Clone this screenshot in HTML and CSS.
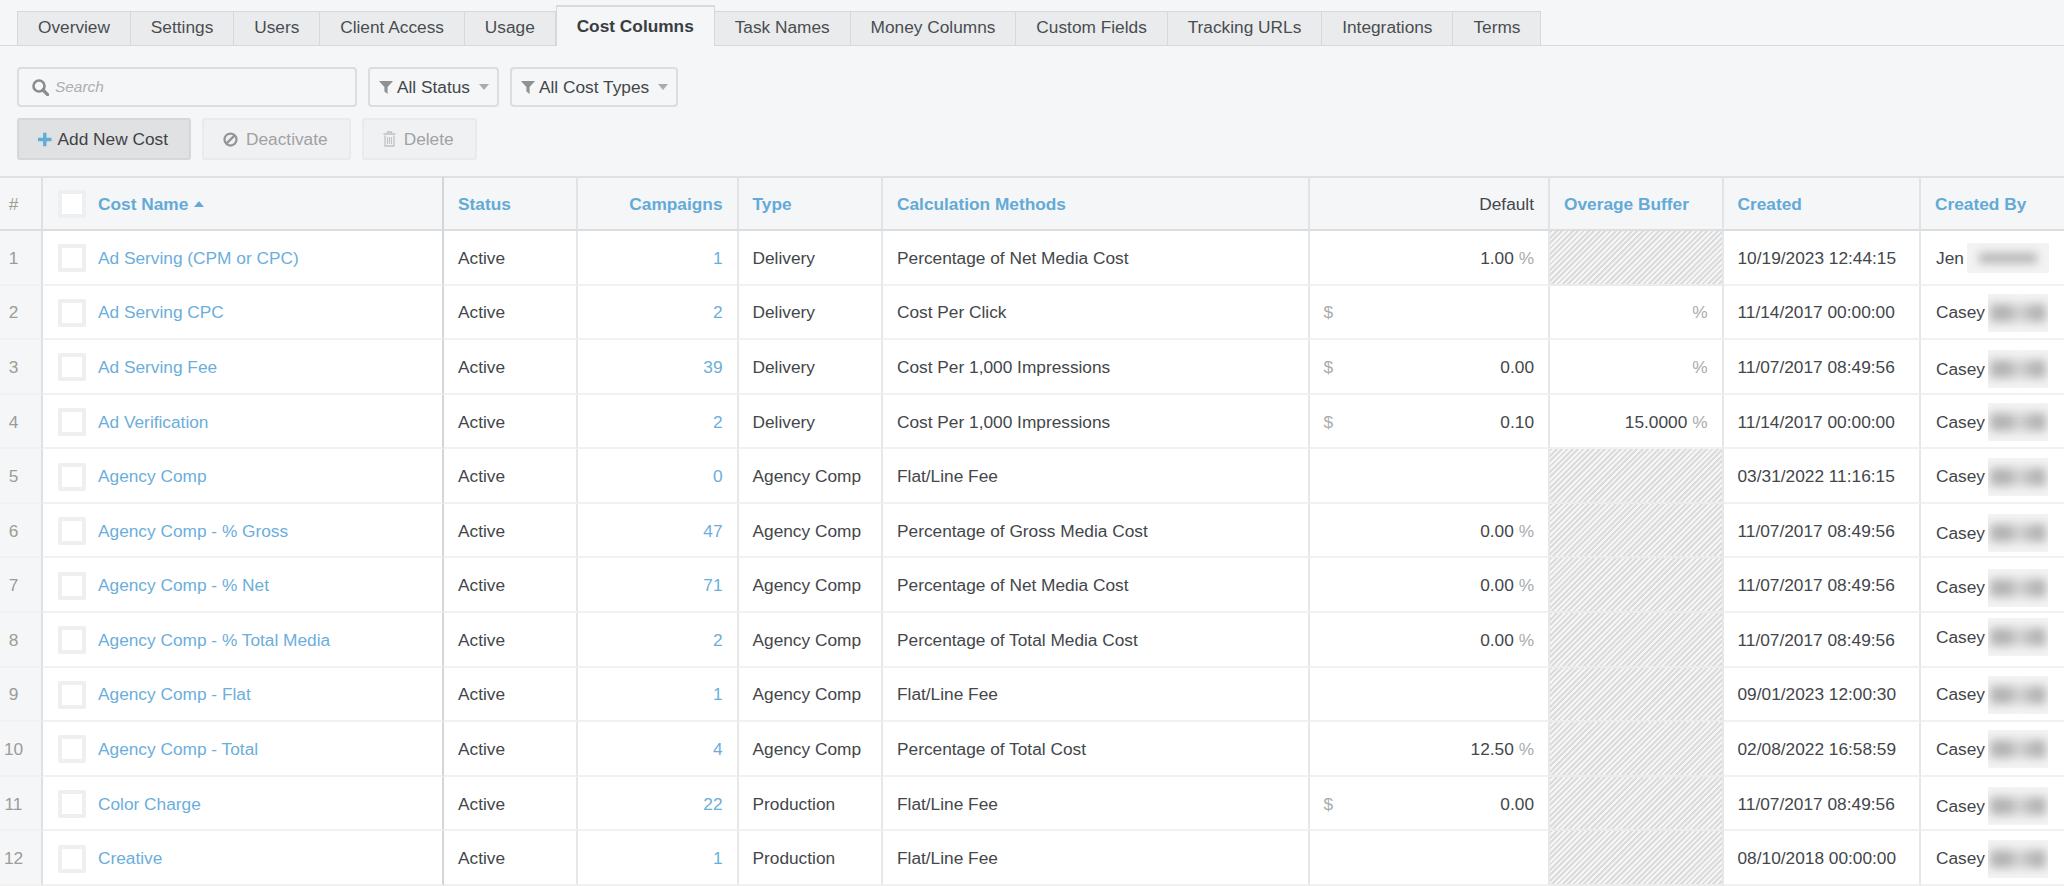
FILE: index.html
```html
<!DOCTYPE html>
<html lang="en">
<head>
<meta charset="utf-8">
<title>Cost Columns</title>
<link rel="stylesheet" href="styles.css">
</head>
<body>
<nav class="tabs">
  <a class="tab">Overview</a><a class="tab">Settings</a><a class="tab">Users</a><a class="tab">Client Access</a><a class="tab">Usage</a><a class="tab active">Cost Columns</a><a class="tab">Task Names</a><a class="tab">Money Columns</a><a class="tab">Custom Fields</a><a class="tab">Tracking URLs</a><a class="tab">Integrations</a><a class="tab">Terms</a>
</nav>
<section class="toolbar">
  <div class="bar">
    <label class="search">
      <svg class="ic-search" viewBox="0 0 17 17"><circle cx="7" cy="7" r="5.5" fill="none" stroke="currentColor" stroke-width="2.6"/><path d="M11 11l4.6 4.6" fill="none" stroke="currentColor" stroke-width="3.2" stroke-linecap="round"/></svg>
      <span class="placeholder">Search</span>
    </label>
    <button class="filter">
      <svg class="ic-funnel" viewBox="0 0 14 13"><path d="M0 0h14L8.6 6v7L5.4 10.6V6z" fill="currentColor"/></svg>
      <span>All Status</span><i class="caret"></i>
    </button>
    <button class="filter">
      <svg class="ic-funnel" viewBox="0 0 14 13"><path d="M0 0h14L8.6 6v7L5.4 10.6V6z" fill="currentColor"/></svg>
      <span>All Cost Types</span><i class="caret"></i>
    </button>
  </div>
  <div class="bar">
    <button class="btn primary">
      <svg class="ic-plus" viewBox="0 0 15 15"><path d="M5.6 0h3.8v5.6H15v3.8H9.4V15H5.6V9.4H0V5.6h5.6z" fill="currentColor"/></svg>
      <span>Add New Cost</span>
    </button>
    <button class="btn off">
      <svg class="ic-ban" viewBox="0 0 16 16"><circle cx="8" cy="8" r="6.4" fill="none" stroke="currentColor" stroke-width="2.4"/><path d="M12.4 3.6l-8.8 8.8" stroke="currentColor" stroke-width="2.4"/></svg>
      <span>Deactivate</span>
    </button>
    <button class="btn off">
      <svg class="ic-trash" viewBox="0 0 13 16"><path d="M4.5 2.5V1h4v1.5M0.5 3h12M2 4.5V15h9V4.5" fill="none" stroke="currentColor" stroke-width="1.3"/><path d="M4.5 6v7M6.5 6v7M8.5 6v7" stroke="currentColor" stroke-width="1.1"/></svg>
      <span>Delete</span>
    </button>
  </div>
</section>
<table class="grid">
  <colgroup>
    <col class="c-num"><col class="c-name"><col class="c-status"><col class="c-camp"><col class="c-type"><col class="c-calc"><col class="c-def"><col class="c-buf"><col class="c-created"><col class="c-by">
  </colgroup>
  <thead>
    <tr>
      <th class="num">#</th>
      <th class="name"><span class="namewrap"><span class="check"></span><span class="head">Cost Name</span><i class="sort"></i></span></th>
      <th class="head status">Status</th>
      <th class="head right">Campaigns</th>
      <th class="head">Type</th>
      <th class="head">Calculation Methods</th>
      <th class="plain right">Default</th>
      <th class="head">Overage Buffer</th>
      <th class="head">Created</th>
      <th class="head">Created By</th>
    </tr>
  </thead>
  <tbody>
    <tr>
      <td class="num">1</td>
      <td class="name"><span class="namewrap"><span class="check"></span><a>Ad Serving (CPM or CPC)</a></span></td>
      <td>Active</td><td class="right"><a>1</a></td><td>Delivery</td><td>Percentage of Net Media Cost</td>
      <td class="right">1.00 <span class="unit">%</span></td>
      <td class="hatch"></td>
      <td>10/19/2023 12:44:15</td>
      <td class="by"><span class="who">Jen</span><span class="redact wide"></span></td>
    </tr>
    <tr>
      <td class="num">2</td>
      <td class="name"><span class="namewrap"><span class="check"></span><a>Ad Serving CPC</a></span></td>
      <td>Active</td><td class="right"><a>2</a></td><td>Delivery</td><td>Cost Per Click</td>
      <td><span class="money"><span class="unit">$</span><span></span></span></td>
      <td class="right"><span class="unit">%</span></td>
      <td>11/14/2017 00:00:00</td>
      <td class="by"><span class="who">Casey</span><span class="redact"></span></td>
    </tr>
    <tr class="low">
      <td class="num">3</td>
      <td class="name"><span class="namewrap"><span class="check"></span><a>Ad Serving Fee</a></span></td>
      <td>Active</td><td class="right"><a>39</a></td><td>Delivery</td><td>Cost Per 1,000 Impressions</td>
      <td><span class="money"><span class="unit">$</span><span>0.00</span></span></td>
      <td class="right"><span class="unit">%</span></td>
      <td>11/07/2017 08:49:56</td>
      <td class="by"><span class="who">Casey</span><span class="redact"></span></td>
    </tr>
    <tr>
      <td class="num">4</td>
      <td class="name"><span class="namewrap"><span class="check"></span><a>Ad Verification</a></span></td>
      <td>Active</td><td class="right"><a>2</a></td><td>Delivery</td><td>Cost Per 1,000 Impressions</td>
      <td><span class="money"><span class="unit">$</span><span>0.10</span></span></td>
      <td class="right">15.0000 <span class="unit">%</span></td>
      <td>11/14/2017 00:00:00</td>
      <td class="by"><span class="who">Casey</span><span class="redact"></span></td>
    </tr>
    <tr>
      <td class="num">5</td>
      <td class="name"><span class="namewrap"><span class="check"></span><a>Agency Comp</a></span></td>
      <td>Active</td><td class="right"><a>0</a></td><td>Agency Comp</td><td>Flat/Line Fee</td>
      <td></td>
      <td class="hatch"></td>
      <td>03/31/2022 11:16:15</td>
      <td class="by"><span class="who">Casey</span><span class="redact"></span></td>
    </tr>
    <tr class="low">
      <td class="num">6</td>
      <td class="name"><span class="namewrap"><span class="check"></span><a>Agency Comp - % Gross</a></span></td>
      <td>Active</td><td class="right"><a>47</a></td><td>Agency Comp</td><td>Percentage of Gross Media Cost</td>
      <td class="right">0.00 <span class="unit">%</span></td>
      <td class="hatch"></td>
      <td>11/07/2017 08:49:56</td>
      <td class="by"><span class="who">Casey</span><span class="redact"></span></td>
    </tr>
    <tr class="low">
      <td class="num">7</td>
      <td class="name"><span class="namewrap"><span class="check"></span><a>Agency Comp - % Net</a></span></td>
      <td>Active</td><td class="right"><a>71</a></td><td>Agency Comp</td><td>Percentage of Net Media Cost</td>
      <td class="right">0.00 <span class="unit">%</span></td>
      <td class="hatch"></td>
      <td>11/07/2017 08:49:56</td>
      <td class="by"><span class="who">Casey</span><span class="redact"></span></td>
    </tr>
    <tr class="high">
      <td class="num">8</td>
      <td class="name"><span class="namewrap"><span class="check"></span><a>Agency Comp - % Total Media</a></span></td>
      <td>Active</td><td class="right"><a>2</a></td><td>Agency Comp</td><td>Percentage of Total Media Cost</td>
      <td class="right">0.00 <span class="unit">%</span></td>
      <td class="hatch"></td>
      <td>11/07/2017 08:49:56</td>
      <td class="by"><span class="who">Casey</span><span class="redact"></span></td>
    </tr>
    <tr>
      <td class="num">9</td>
      <td class="name"><span class="namewrap"><span class="check"></span><a>Agency Comp - Flat</a></span></td>
      <td>Active</td><td class="right"><a>1</a></td><td>Agency Comp</td><td>Flat/Line Fee</td>
      <td></td>
      <td class="hatch"></td>
      <td>09/01/2023 12:00:30</td>
      <td class="by"><span class="who">Casey</span><span class="redact"></span></td>
    </tr>
    <tr>
      <td class="num">10</td>
      <td class="name"><span class="namewrap"><span class="check"></span><a>Agency Comp - Total</a></span></td>
      <td>Active</td><td class="right"><a>4</a></td><td>Agency Comp</td><td>Percentage of Total Cost</td>
      <td class="right">12.50 <span class="unit">%</span></td>
      <td class="hatch"></td>
      <td>02/08/2022 16:58:59</td>
      <td class="by"><span class="who">Casey</span><span class="redact"></span></td>
    </tr>
    <tr class="low">
      <td class="num">11</td>
      <td class="name"><span class="namewrap"><span class="check"></span><a>Color Charge</a></span></td>
      <td>Active</td><td class="right"><a>22</a></td><td>Production</td><td>Flat/Line Fee</td>
      <td><span class="money"><span class="unit">$</span><span>0.00</span></span></td>
      <td class="hatch"></td>
      <td>11/07/2017 08:49:56</td>
      <td class="by"><span class="who">Casey</span><span class="redact"></span></td>
    </tr>
    <tr>
      <td class="num">12</td>
      <td class="name"><span class="namewrap"><span class="check"></span><a>Creative</a></span></td>
      <td>Active</td><td class="right"><a>1</a></td><td>Production</td><td>Flat/Line Fee</td>
      <td></td>
      <td class="hatch"></td>
      <td>08/10/2018 00:00:00</td>
      <td class="by"><span class="who">Casey</span><span class="redact"></span></td>
    </tr>
  </tbody>
</table>
</body>
</html>
```
FILE: styles.css
```css
* { box-sizing: border-box; }
html, body { margin: 0; height: 100%; }
body {
  background: #f4f6f8;
  color: #43464a;
  font-family: "Liberation Sans", Arial, sans-serif;
  font-size: 17.3px;
  overflow: hidden;
}
.tabs {
  display: flex;
  height: 46px;
  padding-left: 17px;
  align-items: flex-end;
  border-bottom: 1px solid #d9dadc;
}
.tab {
  height: 35px;
  margin-bottom: -1px;
  padding: 0 19.95px 2px;
  display: flex;
  align-items: center;
  background: #e9ebed;
  border: 1px solid #d6d8da;
  border-left: 0;
  color: #4a4d50;
  white-space: nowrap;
}
.tab:first-child { border-left: 1px solid #d6d8da; }
.tab.active {
  height: 41px;
  padding-bottom: 0;
  background: #f4f6f8;
  border-left: 1px solid #d6d8da;
  border-bottom: 0;
  font-weight: 700;
  color: #3a3d42;
  border-top: 2px solid #d9dadc;
}
.toolbar {
  padding: 21px 17px 16px;
  display: flex;
  flex-direction: column;
  gap: 11px;
}
.bar { display: flex; gap: 11px; }
.search {
  width: 340px;
  height: 40px;
  display: flex;
  align-items: center;
  gap: 6px;
  padding-left: 13px;
  border: 2px solid #dcdddf;
  border-radius: 4px;
  color: #8a8c8e;
}
.ic-search { width: 17px; height: 17px; }
.placeholder {
  font-style: italic;
  font-size: 15.4px;
  color: #adafb1;
}
button {
  font: inherit;
  display: flex;
  align-items: center;
  justify-content: flex-start;
  white-space: nowrap;
  cursor: default;
}
.filter {
  height: 40px;
  padding: 0 8px 0 9px;
  background: transparent;
  border: 2px solid #dcdddf;
  border-radius: 4px;
  color: #43464a;
}
.ic-funnel { width: 14px; height: 13px; margin-right: 4px; color: #8f9193; }
.caret {
  margin-left: 9px;
  width: 0; height: 0;
  border-left: 5px solid transparent;
  border-right: 5px solid transparent;
  border-top: 6px solid #a9abad;
}
.btn {
  height: 42px;
  padding: 0 21px 0 19px;
  gap: 8px;
  border-radius: 3px;
}
.primary {
  width: 174px;
  gap: 6px;
  background: #e0e1e3;
  border: 2px solid #d6d7d9;
  color: #3f4246;
}
.off {
  background: #f0f1f2;
  border: 2px solid #e9eaeb;
  color: #a0a2a4;
}
.ic-plus { width: 15px; height: 15px; color: #62acd9; }
.ic-ban { width: 15px; height: 15px; color: #939597; }
.ic-trash { width: 13px; height: 16px; color: #c0c2c4; }
.grid {
  table-layout: fixed;
  width: 100%;
  border-collapse: separate;
  border-spacing: 0;
}
.c-num { width: 43px; }
.c-name { width: 401px; }
.c-status { width: 133.5px; }
.c-camp { width: 161px; }
.c-type { width: 144.5px; }
.c-calc { width: 426.5px; }
.c-def { width: 240.5px; }
.c-buf { width: 173.5px; }
.c-created { width: 197.5px; }
th, td {
  padding: 0 14px;
  text-align: left;
  font-weight: 400;
  white-space: nowrap;
  overflow: hidden;
  border-right: 2px solid #e6e7e8;
}
th:last-child, td:last-child { border-right: 0; }
thead tr { height: 55px; }
th {
  padding-top: 1px;
  background: #f4f6f8;
  border-top: 2px solid #dfe0e2;
  border-bottom: 2px solid #dcddde;
  border-right-color: #e2e3e5;
}
tbody tr { height: 54.58px; }
td {
  padding-top: 2px;
  background: #fff;
  border-bottom: 2px solid #f1f1f2;
}
th.num, td.num {
  padding-left: 0;
  padding-right: 14px;
  text-align: center;
  color: #9c9c98;
  background: #f4f6f8;
  border-right-color: #dfe0e2;
}
th.name, td.name {
  padding-left: 15px;
  border-right-color: #d4d5d7;
}
.namewrap { display: flex; align-items: center; gap: 12px; }
.check {
  flex: none;
  width: 28px;
  height: 28px;
  background: #fff;
  border: 4px solid #eeeff0;
  border-radius: 2px;
}
.head { color: #64aad6; font-weight: 700; }
th.plain { color: #43464a; }
.sort {
  margin-left: -6px;
  width: 0; height: 0;
  border-left: 5px solid transparent;
  border-right: 5px solid transparent;
  border-bottom: 6px solid #64aad6;
}
a { color: #6caedb; }
.right { text-align: right; }
.unit { color: #a9abad; }
.money { display: flex; justify-content: space-between; }
td.hatch {
  background: repeating-linear-gradient(135deg, #dcdcdc 0 1.9px, #f5f5f5 1.9px 3.8px);
  border-bottom-color: #ececec;
}
.by { padding-right: 0; padding-left: 15px; }
.who { display: inline-block; vertical-align: middle; }
.redact {
  display: inline-block;
  vertical-align: middle;
  position: relative;
  overflow: hidden;
  width: 60px;
  height: 38px;
  margin-left: 3px;
  background: #f3f3f3;
}
.redact.wide { width: 82px; height: 30px; }
.redact::before {
  content: "";
  position: absolute;
  inset: 10px 2px;
  background: linear-gradient(90deg, #b4b4b4 0 35%, #d8d8d8 50%, #b8b8b8 75%, #b0b0b0);
  filter: blur(5px);
}
.redact.wide::before {
  inset: 10px 12px;
  background: #b4b4b4;
}
.low .by { padding-top: 6px; }
.high .by { padding-bottom: 4px; padding-top: 0; }
```
